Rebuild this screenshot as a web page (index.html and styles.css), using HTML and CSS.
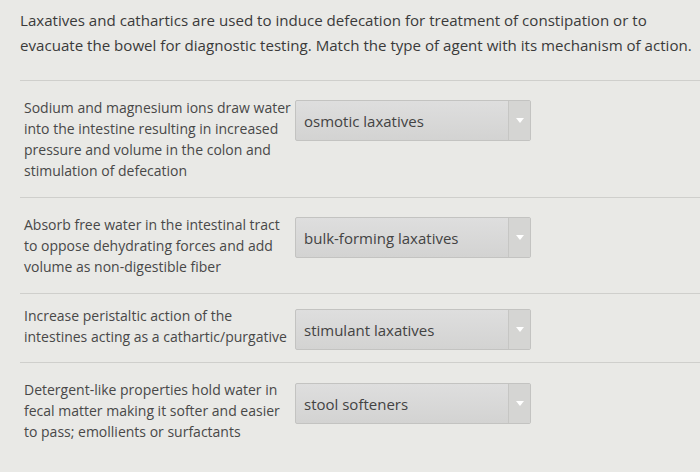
FILE: index.html
```html
<!DOCTYPE html>
<html>
<head>
<meta charset="utf-8">
<link rel="stylesheet" href="styles.css">
</head>
<body>
<div class="page">
  <p class="prompt">Laxatives and cathartics are used to induce defecation for treatment of constipation or to evacuate the bowel for diagnostic testing. Match the type of agent with its mechanism of action.</p>
  <div class="rows">
    <div class="row r1">
      <div class="desc">Sodium and magnesium ions draw water into the intestine resulting in increased pressure and volume in the colon and stimulation of defecation</div>
      <div class="select"><span class="value">osmotic laxatives</span><span class="arrow"><svg width="8" height="5" viewBox="0 0 8 5"><path d="M0 0H8L4 5Z" fill="#fff"/></svg></span></div>
    </div>
    <div class="row r2">
      <div class="desc">Absorb free water in the intestinal tract to oppose dehydrating forces and add volume as non-digestible fiber</div>
      <div class="select"><span class="value">bulk-forming laxatives</span><span class="arrow"><svg width="8" height="5" viewBox="0 0 8 5"><path d="M0 0H8L4 5Z" fill="#fff"/></svg></span></div>
    </div>
    <div class="row r3">
      <div class="desc">Increase peristaltic action of the intestines acting as a cathartic/purgative</div>
      <div class="select"><span class="value">stimulant laxatives</span><span class="arrow"><svg width="8" height="5" viewBox="0 0 8 5"><path d="M0 0H8L4 5Z" fill="#fff"/></svg></span></div>
    </div>
    <div class="row r4">
      <div class="desc">Detergent-like properties hold water in fecal matter making it softer and easier to pass; emollients or surfactants</div>
      <div class="select"><span class="value">stool softeners</span><span class="arrow"><svg width="8" height="5" viewBox="0 0 8 5"><path d="M0 0H8L4 5Z" fill="#fff"/></svg></span></div>
    </div>
  </div>
</div>
</body>
</html>
```

FILE: styles.css
```css
html, body {
  margin: 0;
  padding: 0;
  background: #e9e9e6;
}
.page {
  width: 700px;
  height: 472px;
  overflow: hidden;
  font-family: "Open Sans", "Liberation Sans", sans-serif;
  color: #454545;
}
.prompt {
  margin: 0 -10px 0 20px;
  padding: 8px 0 0 0;
  font-size: 15.1px;
  line-height: 25px;
  color: #3a3a3a;
  height: 72px;
  border-bottom: 1px solid #cfcfcc;
}
.rows {
  padding-left: 20px;
}
.row {
  display: flex;
  align-items: flex-start;
  gap: 3px;
  padding: 16px 0 16px 4px;
  border-bottom: 1px solid #cfcfcc;
}
.row.r3 {
  padding-top: 11px;
  padding-bottom: 12px;
}
.row.r4 {
  border-bottom: none;
}
.r3 .select,
.r4 .select {
  margin-top: 4px;
}
.desc {
  width: 268px;
  font-size: 14px;
  line-height: 21px;
  color: #484848;
}
.select {
  margin-top: 3px;
  width: 236px;
  height: 41px;
  box-sizing: border-box;
  border: 1px solid #c3c3c1;
  border-radius: 2px;
  background: linear-gradient(#dedede, #d3d3d2);
  display: flex;
  align-items: center;
  justify-content: space-between;
}
.value {
  padding-left: 8px;
  font-size: 15px;
  color: #434343;
}
.arrow {
  width: 21px;
  height: 100%;
  border-left: 1px solid #c6c6c4;
  background: #d5d5d3;
  display: flex;
  align-items: center;
  justify-content: center;
}
```
